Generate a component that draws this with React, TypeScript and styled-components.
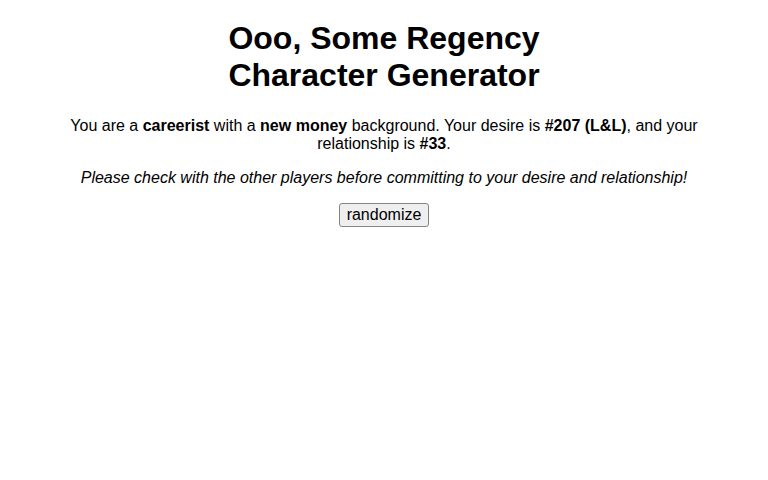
import React from "react";
import styled, { createGlobalStyle } from "styled-components";

const Global = createGlobalStyle`
  body {
    margin: 8px;
    font-family: "Liberation Sans", Arial, sans-serif;
    color: #000;
    background: #fff;
  }
`;

const Page = styled.main`
  text-align: center;
  padding: 0 60px;
`;

const Title = styled.h1`
  font-size: 32px;
  font-weight: bold;
  margin: 12px 0 23px;
  line-height: 37px;
`;

const Summary = styled.p`
  font-size: 16px;
  line-height: 18px;
  margin: 16px 0;
`;

const Note = styled.p`
  font-size: 16px;
  font-style: italic;
  margin: 16px 0;
`;

const RandomButton = styled.button`
  font-family: "Liberation Sans", Arial, sans-serif;
  font-size: 16px;
  line-height: 18px;
  padding: 2px 7px;
  border: 1px solid #858585;
  border-radius: 3px;
  background: #efefef;
  color: #000;
`;

export default function App() {
  return (
    <>
      <Global />
      <Page>
        <Title>
          Ooo, Some Regency
          <br />
          Character Generator
        </Title>
        <Summary>
          You are a <b>careerist</b> with a <b>new money</b> background. Your desire is{" "}
          <b>#207 (L&amp;L)</b>, and your relationship is <b>#33</b>.
        </Summary>
        <Note>Please check with the other players before committing to your desire and relationship!</Note>
        <RandomButton>randomize</RandomButton>
      </Page>
    </>
  );
}
